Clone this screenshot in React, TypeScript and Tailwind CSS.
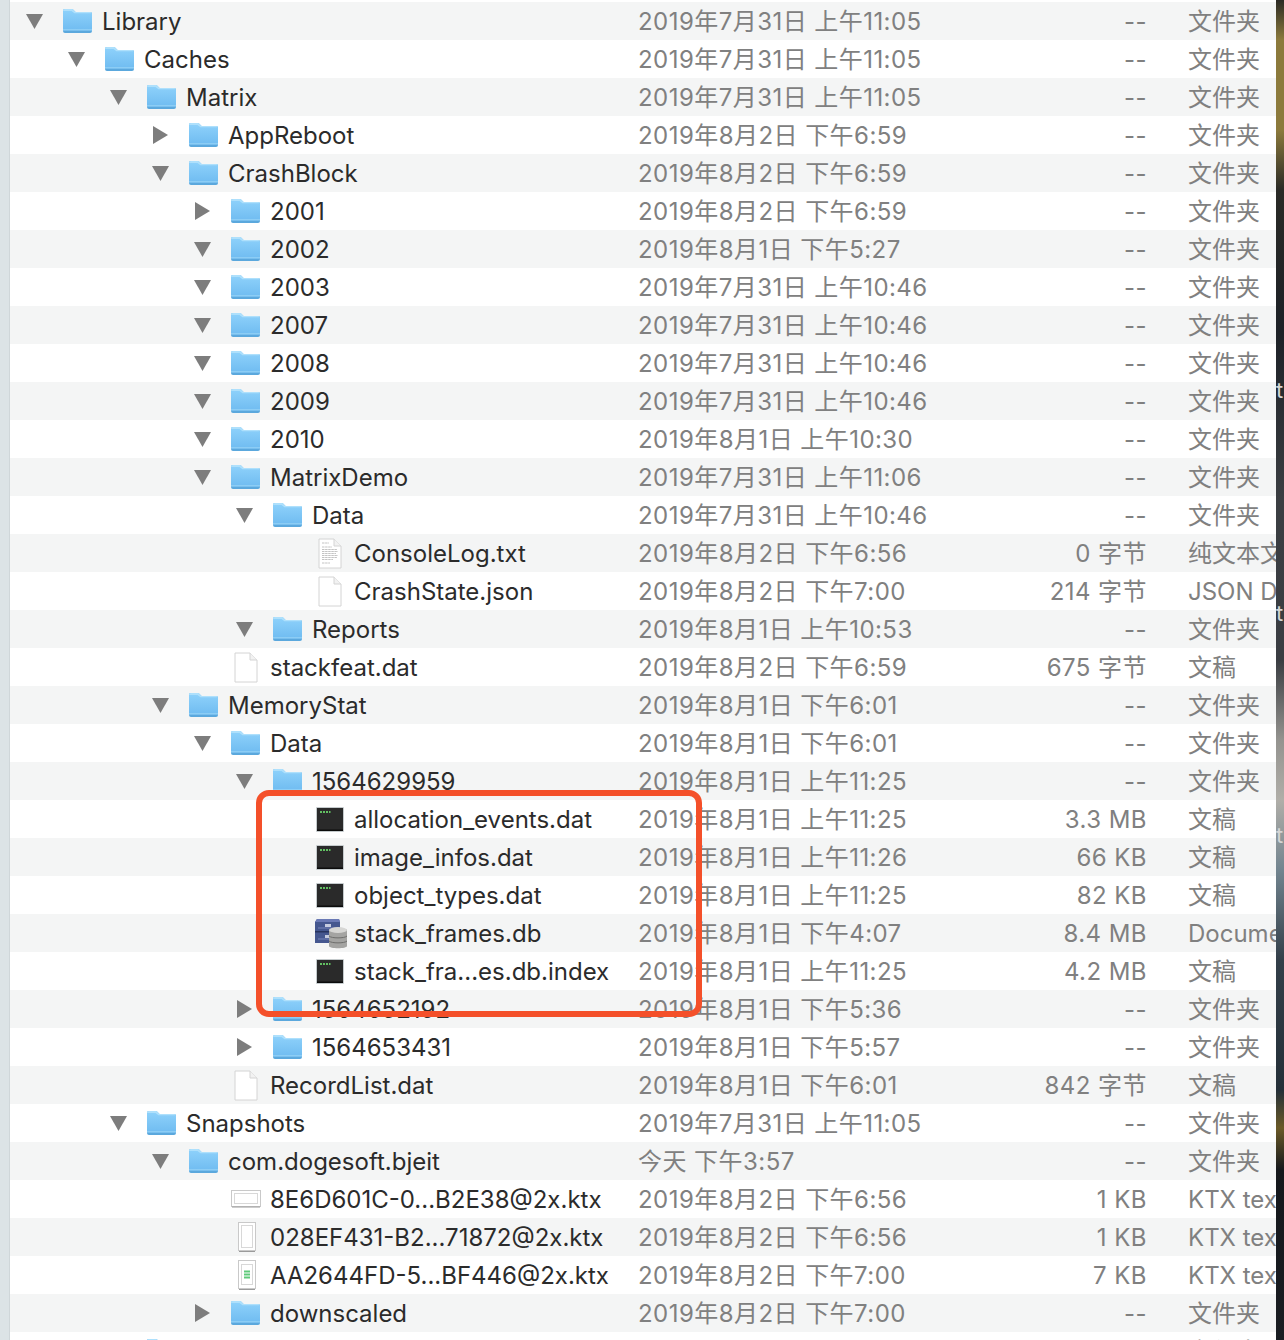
type Icon = "folder" | "doc" | "text" | "term" | "db" | "wide" | "tall" | "phone";

type Row = {
  depth: number;
  arrow?: "down" | "right";
  icon: Icon;
  name: string;
  date: string;
  size: string;
  kind: string;
};

const dir = (depth: number, arrow: "down" | "right", name: string, date: string): Row => ({
  depth,
  arrow,
  icon: "folder",
  name,
  date,
  size: "--",
  kind: "文件夹",
});

const file = (depth: number, icon: Icon, name: string, date: string, size: string, kind: string): Row => ({
  depth,
  icon,
  name,
  date,
  size,
  kind,
});

const rows: Row[] = [
  dir(0, "down", "Library", "2019年7月31日 上午11:05"),
  dir(1, "down", "Caches", "2019年7月31日 上午11:05"),
  dir(2, "down", "Matrix", "2019年7月31日 上午11:05"),
  dir(3, "right", "AppReboot", "2019年8月2日 下午6:59"),
  dir(3, "down", "CrashBlock", "2019年8月2日 下午6:59"),
  dir(4, "right", "2001", "2019年8月2日 下午6:59"),
  dir(4, "down", "2002", "2019年8月1日 下午5:27"),
  dir(4, "down", "2003", "2019年7月31日 上午10:46"),
  dir(4, "down", "2007", "2019年7月31日 上午10:46"),
  dir(4, "down", "2008", "2019年7月31日 上午10:46"),
  dir(4, "down", "2009", "2019年7月31日 上午10:46"),
  dir(4, "down", "2010", "2019年8月1日 上午10:30"),
  dir(4, "down", "MatrixDemo", "2019年7月31日 上午11:06"),
  dir(5, "down", "Data", "2019年7月31日 上午10:46"),
  file(6, "text", "ConsoleLog.txt", "2019年8月2日 下午6:56", "0 字节", "纯文本文稿"),
  file(6, "doc", "CrashState.json", "2019年8月2日 下午7:00", "214 字节", "JSON Document"),
  dir(5, "down", "Reports", "2019年8月1日 上午10:53"),
  file(4, "doc", "stackfeat.dat", "2019年8月2日 下午6:59", "675 字节", "文稿"),
  dir(3, "down", "MemoryStat", "2019年8月1日 下午6:01"),
  dir(4, "down", "Data", "2019年8月1日 下午6:01"),
  dir(5, "down", "1564629959", "2019年8月1日 上午11:25"),
  file(6, "term", "allocation_events.dat", "2019年8月1日 上午11:25", "3.3 MB", "文稿"),
  file(6, "term", "image_infos.dat", "2019年8月1日 上午11:26", "66 KB", "文稿"),
  file(6, "term", "object_types.dat", "2019年8月1日 上午11:25", "82 KB", "文稿"),
  file(6, "db", "stack_frames.db", "2019年8月1日 下午4:07", "8.4 MB", "Document"),
  file(6, "term", "stack_fra...es.db.index", "2019年8月1日 上午11:25", "4.2 MB", "文稿"),
  dir(5, "right", "1564652192", "2019年8月1日 下午5:36"),
  dir(5, "right", "1564653431", "2019年8月1日 下午5:57"),
  file(4, "doc", "RecordList.dat", "2019年8月1日 下午6:01", "842 字节", "文稿"),
  dir(2, "down", "Snapshots", "2019年7月31日 上午11:05"),
  dir(3, "down", "com.dogesoft.bjeit", "今天 下午3:57"),
  file(4, "wide", "8E6D601C-0...B2E38@2x.ktx", "2019年8月2日 下午6:56", "1 KB", "KTX texture"),
  file(4, "tall", "028EF431-B2...71872@2x.ktx", "2019年8月2日 下午6:56", "1 KB", "KTX texture"),
  file(4, "phone", "AA2644FD-5...BF446@2x.ktx", "2019年8月2日 下午7:00", "7 KB", "KTX texture"),
  dir(4, "right", "downscaled", "2019年8月2日 下午7:00"),
  dir(2, "down", "", ""),
];

function Arrow({ dir }: { dir?: "down" | "right" }) {
  if (dir === "down") {
    return (
      <svg width="17" height="15" viewBox="0 0 17 15" className="block">
        <path d="M0 0h17L8.5 15z" fill="#7d7d7d" />
      </svg>
    );
  }
  if (dir === "right") {
    return (
      <svg width="15" height="18" viewBox="0 0 15 18" className="ml-[1px] block">
        <path d="M0 0v18l15-9z" fill="#7d7d7d" />
      </svg>
    );
  }
  return null;
}

function Folder() {
  return (
    <svg width="31" height="26" viewBox="0 0 31 26" className="-ml-[1px] block">
      <defs>
        <linearGradient id="folderBody" x1="0" y1="0" x2="0" y2="1">
          <stop offset="0" stopColor="#8fd2fb" />
          <stop offset="1" stopColor="#70bcf1" />
        </linearGradient>
      </defs>
      <path d="M1 3a2 2 0 0 1 2-2h7.500l3 3H28a2 2 0 0 1 2 2v17a2 2 0 0 1-2 2H3a2 2 0 0 1-2-2z" fill="#5ba8dd" />
      <path d="M1 3a2 2 0 0 1 2-2h7.500l3 3H28a2 2 0 0 1 2 2v16.500H1z" fill="url(#folderBody)" />
      <path d="M1 3a2 2 0 0 1 2-2h7.500l3 3H28a2 2 0 0 1 1.800 1.200H12.500l-3-2.200H1z" fill="#aee0fc" />
      <path d="M1 21h29v1.500H1z" fill="#8ccdf5" />
    </svg>
  );
}

function Doc({ lines }: { lines?: boolean }) {
  return (
    <svg width="24" height="31" viewBox="0 0 24 31" className="block">
      <path d="M1 1h15l7 7v22H1z" fill="#fff" stroke="#d4d4d4" />
      <path d="M16 1v7h7" fill="#f2f2f2" stroke="#d4d4d4" />
      {lines && (
        <path
          d="M4 5h7M4 9h10M4 11.500h15M4 13.500h16M4 15.500h14M4 17.500h16M4 19.500h15M4 21.500h11M4 25h8"
          stroke="#b4b4b4"
          strokeWidth="0.8"
          strokeDasharray="2.500 .6"
        />
      )}
    </svg>
  );
}

function Terminal() {
  return (
    <svg width="28" height="25" viewBox="0 0 28 25" className="block">
      <rect x="0" y="0" width="28" height="25" rx="1" fill="#c4cacc" />
      <rect x="1" y="1" width="26" height="22.500" fill="#2a2a2a" />
      <path d="M1 22.500h26v1.500H1z" fill="#0c0c0c" />
      <path d="M4 5h2M7 5h2M10 5h2M13 5h1.500" stroke="#62c062" strokeWidth="1.800" />
    </svg>
  );
}

function Database() {
  return (
    <svg width="33" height="31" viewBox="0 0 33 31" className="block">
      <path d="M2 1h22l1 3v21H0V4z" fill="#45578f" />
      <path d="M2 1h22l1 3H0z" fill="#6a79b5" />
      <path d="M0 13h25v1.500H0z" fill="#28345f" />
      <rect x="10" y="6" width="6" height="3" fill="#c6cce0" />
      <rect x="10" y="17" width="6" height="3" fill="#c6cce0" />
      <path d="M3 10h19M3 21h12" stroke="#7886ba" />
      <path d="M14 12c0-2 18-2 18 0v16c0 3-18 3-18 0z" fill="#a4a4a2" />
      <ellipse cx="23" cy="12" rx="9" ry="3" fill="#d6d6d4" />
      <path d="M14 18c2 2.500 16 2.500 18 0M14 23c2 2.500 16 2.500 18 0" stroke="#6e6e6c" fill="none" />
    </svg>
  );
}

function Wide() {
  return (
    <svg width="30" height="18" viewBox="0 0 30 18" className="block">
      <rect x="0.500" y="0.500" width="29" height="16" fill="#fff" stroke="#c9c9c9" />
      <path d="M1 17h28" stroke="#9a9a9a" />
      <rect x="3.500" y="3.500" width="23" height="10" fill="#fff" stroke="#d8d8d8" />
    </svg>
  );
}

function Tall({ bars }: { bars?: boolean }) {
  return (
    <svg width="18" height="30" viewBox="0 0 18 30" className="block">
      <rect x="0.500" y="0.500" width="17" height="28" fill="#fff" stroke="#c9c9c9" />
      <path d="M1 29.500h16" stroke="#9a9a9a" />
      <rect x="3.500" y={bars ? 4.500 : 3.500} width="11" height={bars ? 20 : 22} fill="#fff" stroke="#d8d8d8" />
      {bars && <path d="M6 11.500h6M6 14.500h6M6 17.500h6" stroke="#5fca7a" strokeWidth="2" />}
    </svg>
  );
}

function RowIcon({ icon }: { icon: Icon }) {
  switch (icon) {
    case "folder":
      return <Folder />;
    case "doc":
      return <Doc />;
    case "text":
      return <Doc lines />;
    case "term":
      return <Terminal />;
    case "db":
      return <Database />;
    case "wide":
      return <Wide />;
    case "tall":
      return <Tall />;
    case "phone":
      return <Tall bars />;
  }
}

const iconBox: Record<Icon, string> = {
  folder: "pl-0",
  doc: "pl-[3px]",
  text: "pl-[3px]",
  term: "pl-[1px]",
  db: "pl-0",
  wide: "pl-0",
  tall: "pl-[7px]",
  phone: "pl-[7px]",
};

export default function App() {
  return (
    <div className="relative flex h-[1340px] w-[1284px] overflow-hidden bg-white font-['Inter','Noto_Sans_CJK_SC',sans-serif] text-[24px]">
      <div className="w-[10px] shrink-0 border-r border-[#cfd6d9] bg-[#dce3e6]" />

      <div className="min-w-0 flex-1 overflow-hidden pt-[2px]">
        {rows.map((r, i) => (
          <div key={i} className={`flex h-[38px] items-center whitespace-nowrap ${i % 2 === 0 ? "bg-[#f4f5f5]" : "bg-white"}`}>
            <div className="flex w-[628px] shrink-0 items-center" style={{ paddingLeft: 16 + r.depth * 42 }}>
              <div className="flex w-[37px] shrink-0 items-center">
                <Arrow dir={r.arrow} />
              </div>
              <div className={`w-[39px] shrink-0 ${iconBox[r.icon]}`}>
                <RowIcon icon={r.icon} />
              </div>
              <span className="pt-[2px] text-[#2b2b2b]">{r.name}</span>
            </div>
            <div className="w-[509px] shrink-0 pt-[2px] tracking-[0.45px] text-[#808080]">
              <div className="flex justify-between">
                <span>{r.date}</span>
                <span>{r.size}</span>
              </div>
            </div>
            <div className="pl-[41px] pt-[2px] text-[#808080]">{r.kind}</div>
          </div>
        ))}
      </div>

      <div className="relative w-[8px] shrink-0 overflow-hidden bg-[linear-gradient(180deg,#2b2a24_0px,#8c7a3c_40px,#8c7a3c_130px,#2a2a26_190px,#1d2127_330px,#3b3e42_500px,#3a3d42_660px,#94938f_740px,#b0aea8_800px,#72848f_870px,#333f49_960px,#242f38_1090px,#6b5a28_1128px,#15181c_1170px,#1a1d22_1340px)]">
        <span className="absolute left-0 top-[375px] text-[22px] leading-[30px] text-[#d5d5d5]">t</span>
        <span className="absolute left-0 top-[598px] text-[22px] leading-[30px] text-[#d5d5d5]">t</span>
        <span className="absolute left-0 top-[820px] text-[22px] leading-[30px] text-[#d5d5d5]">t</span>
      </div>

      {/* red annotation */}
      <div className="pointer-events-none absolute left-[256px] top-[790px] h-[227px] w-[446px] rounded-[13px] border-[6px] border-[#f4502a]" />
    </div>
  );
}
